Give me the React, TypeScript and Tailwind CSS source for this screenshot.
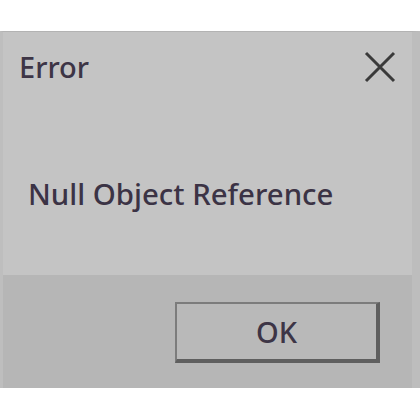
import React from 'react';

const CloseIcon: React.FC = () => (
  <svg width="32" height="32" viewBox="0 0 32 32" className="block">
    <path d="M2 2 L30 30 M30 2 L2 30" stroke="#3a3a3a" strokeWidth="3" />
  </svg>
);

const ErrorDialog: React.FC = () => {
  return (
    <div className="mt-[31px] h-[357px] w-full flex flex-col bg-[#c4c4c4] border-t border-[#b3b3b3] border-r-[8px] border-r-[#bdbdbd] border-l-[3px] border-l-[#bebebe]">
      <div className="flex items-start justify-between pl-[16px] pr-[16px] pt-[20px] h-[100px]">
        <span className="text-[29px] font-medium leading-none text-[#3d3546]">Error</span>
        <div className="-mt-[1px]">
          <CloseIcon />
        </div>
      </div>
      <div className="flex-1 pl-[25px] pt-[48px]">
        <p className="text-[29.4px] font-medium leading-none text-[#3b3345]">Null Object Reference</p>
      </div>
      <div className="h-[113px] bg-[#b6b6b6] flex justify-end items-start pt-[27px] pr-[32px]">
        <button
          type="button"
          className="w-[205px] h-[61px] bg-[#b9b9b9] border-t-2 border-l-2 border-t-[#7c7c7c] border-l-[#7c7c7c] border-r-[4px] border-b-[4px] border-r-[#5f5f5f] border-b-[#5f5f5f] flex items-center justify-center text-[29px] font-medium leading-none text-[#3d3546]"
        >
          OK
        </button>
      </div>
    </div>
  );
};

export default function App() {
  return (
    <div className="w-[420px] h-[420px] bg-white overflow-hidden" style={{ fontFamily: '"Noto Sans", "Open Sans", sans-serif' }}>
      <ErrorDialog />
    </div>
  );
}
